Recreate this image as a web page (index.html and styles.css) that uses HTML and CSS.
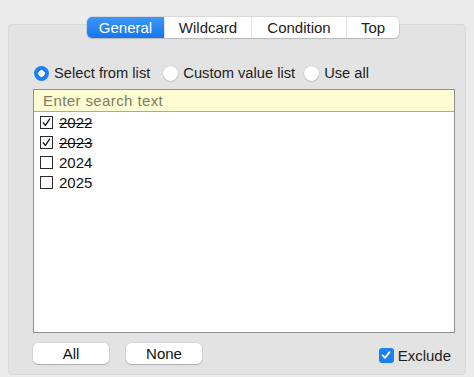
FILE: index.html
```html
<!DOCTYPE html>
<html lang="en">
  <head>
    <meta charset="UTF-8">
    <title>Filter</title>
    <link rel="stylesheet" href="styles.css">
  </head>
  <body>
    <div class="panel">
      <div class="tabs">
        <div class="tab active tab-general">General</div>
        <div class="tab tab-wildcard">Wildcard</div>
        <div class="tab tab-condition">Condition</div>
        <div class="tab tab-top">Top</div>
      </div>

      <div class="modes">
        <label class="mode mode-list"><span class="radio checked"></span>Select from list</label>
        <label class="mode mode-custom"><span class="radio"></span>Custom value list</label>
        <label class="mode"><span class="radio"></span>Use all</label>
      </div>

      <div class="list">
        <div class="search">Enter search text</div>
        <div class="items">
          <div class="item excluded">
            <span class="box">
              <svg viewBox="0 0 13 13" width="11" height="11">
                <path d="M2.6 6.8 L5.2 9.8 L10.2 2.4" fill="none" stroke="#111" stroke-width="1.5" stroke-linecap="round" stroke-linejoin="round" />
              </svg>
            </span>
            <span class="label">2022</span>
          </div>
          <div class="item excluded">
            <span class="box">
              <svg viewBox="0 0 13 13" width="11" height="11">
                <path d="M2.6 6.8 L5.2 9.8 L10.2 2.4" fill="none" stroke="#111" stroke-width="1.5" stroke-linecap="round" stroke-linejoin="round" />
              </svg>
            </span>
            <span class="label">2023</span>
          </div>
          <div class="item"><span class="box"></span><span class="label">2024</span></div>
          <div class="item"><span class="box"></span><span class="label">2025</span></div>
        </div>
      </div>

      <div class="footer">
        <button class="btn">All</button>
        <button class="btn">None</button>
        <label class="exclude">
          <span class="check-blue">
            <svg viewBox="0 0 16 16" width="12" height="12">
              <path d="M3.5 8.5 L6.8 11.8 L12.6 4.2" fill="none" stroke="#fff" stroke-width="2.4" stroke-linecap="round" stroke-linejoin="round" />
            </svg>
          </span>
          Exclude
        </label>
      </div>
    </div>
  </body>
</html>
```

FILE: styles.css
```css
* {
  box-sizing: border-box;
  font-family: 'Liberation Sans', Arial, sans-serif;
}

body {
  margin: 0;
  background: #ececec;
  padding: 24px 8px 0 8px;
  width: 474px;
  height: 377px;
  overflow: hidden;
}

.panel {
  width: 458px;
  height: 351px;
  background: #e3e3e3;
  border: 1px solid #d9d9d9;
  border-radius: 4px;
  display: flex;
  flex-direction: column;
  padding: 0 10px 0 24px;
}

/* segmented tabs */
.tabs {
  display: flex;
  height: 21px;
  margin-top: -8px;
  margin-left: 54px;
  align-self: flex-start;
  background: #fff;
  border-radius: 5px;
  box-shadow: 0 0 0 1px rgba(0, 0, 0, 0.08), 0 1px 1px rgba(0, 0, 0, 0.12);
}

.tab {
  font-size: 15px;
  line-height: 21px;
  text-align: center;
  color: #222;
  border-left: 1px solid #e2e2e2;
}

.tab:first-child {
  border-left: none;
  border-radius: 5px 0 0 5px;
}

.tab:last-child {
  border-radius: 0 5px 5px 0;
}

.tab.active {
  background: linear-gradient(#3d97f8, #1577ef);
  color: #fff;
}

.tab-general {
  width: 77px;
}

.tab-wildcard {
  width: 87px;
}

.tab-condition {
  width: 95px;
}

.tab-top {
  width: 53px;
}

/* radio row */
.modes {
  display: flex;
  align-items: center;
  margin-top: 26px;
  height: 18px;
}

.mode {
  display: flex;
  align-items: center;
  font-size: 14.7px;
  color: #1e1e1e;
  gap: 5px;
}

.mode-list {
  margin-left: 1px;
  margin-right: 13px;
}

.mode-custom {
  margin-right: 9px;
}

.radio {
  width: 15px;
  height: 15px;
  border-radius: 50%;
  background: #fff;
  box-shadow: 0 0 0 0.5px rgba(0, 0, 0, 0.12), 0 1px 1px rgba(0, 0, 0, 0.1);
  display: inline-block;
}

.radio.checked {
  background: radial-gradient(circle, #fff 0, #fff 3px, #1a80f6 3.5px);
  box-shadow: none;
}

/* list */
.list {
  margin-top: 7px;
  height: 244px;
  border: 1px solid #8f8f8f;
  background: #fff;
  display: flex;
  flex-direction: column;
}

.search {
  height: 22px;
  background: #fdfdd3;
  border-bottom: 1px solid #a8a8a8;
  color: #7d7d62;
  font-size: 15px;
  line-height: 21px;
  padding-left: 9px;
  letter-spacing: 0.4px;
}

.item {
  height: 20px;
  display: flex;
  align-items: center;
  font-size: 15px;
  color: #111;
  padding-left: 6px;
  gap: 6px;
}

.item.excluded .label {
  text-decoration: line-through;
}

.box {
  width: 13px;
  height: 13px;
  border: 1px solid #2a2a2a;
  display: flex;
  align-items: center;
  justify-content: center;
}

/* bottom row */
.footer {
  display: flex;
  align-items: center;
  margin-top: 10px;
  gap: 17px;
  padding-right: 4px;
}

.btn {
  width: 76px;
  height: 21px;
  background: #fff;
  border: none;
  border-radius: 5px;
  box-shadow: 0 0 0 0.5px rgba(0, 0, 0, 0.12), 0 1px 1px rgba(0, 0, 0, 0.18);
  font-size: 15px;
  color: #111;
  padding: 0;
}

.exclude {
  margin-left: auto;
  margin-top: 3px;
  display: flex;
  align-items: center;
  gap: 4px;
  font-size: 15px;
  color: #1e1e1e;
}

.check-blue {
  width: 15px;
  height: 15px;
  border-radius: 3px;
  background: #1a80f6;
  display: flex;
  align-items: center;
  justify-content: center;
}
```
